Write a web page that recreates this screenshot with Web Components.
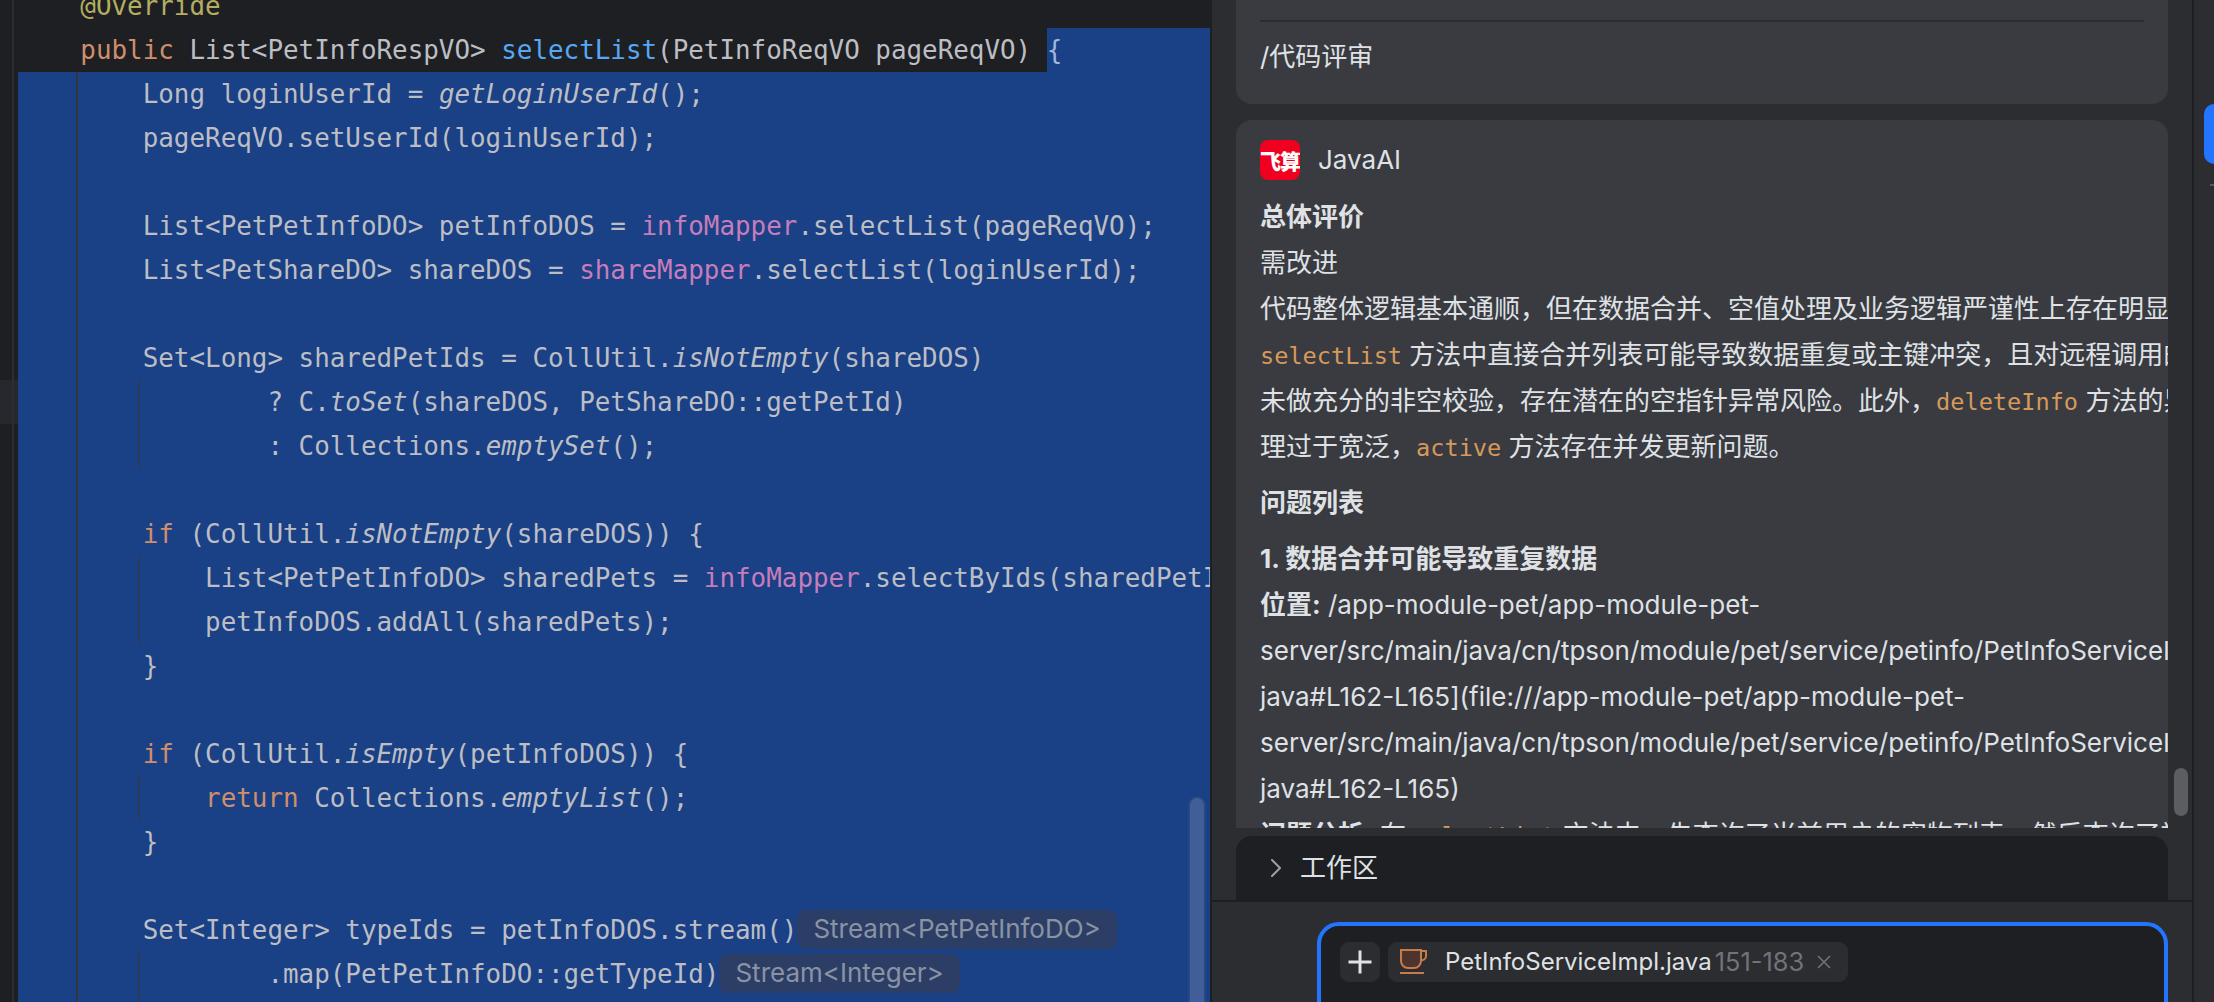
<!DOCTYPE html>
<html lang="zh">
<head>
<meta charset="utf-8">
<title>PetInfoServiceImpl</title>
<style>
html,body{margin:0;padding:0;height:100%;background:#1e1f22;overflow:hidden}
</style>
</head>
<body>
<app-shell>
  <code-editor>
    <code-line><code-tok k="ann">    @Override</code-tok></code-line>
    <code-line partial><code-tok k="kw">    public</code-tok> List&lt;PetInfoRespVO&gt; <code-tok k="fn">selectList</code-tok>(PetInfoReqVO pageReqVO) <code-tok k="br">{</code-tok></code-line>
    <code-line sel>        Long loginUserId = <code-tok k="it">getLoginUserId</code-tok>();</code-line>
    <code-line sel>        pageReqVO.setUserId(loginUserId);</code-line>
    <code-line sel></code-line>
    <code-line sel>        List&lt;PetPetInfoDO&gt; petInfoDOS = <code-tok k="fd">infoMapper</code-tok>.selectList(pageReqVO);</code-line>
    <code-line sel>        List&lt;PetShareDO&gt; shareDOS = <code-tok k="fd">shareMapper</code-tok>.selectList(loginUserId);</code-line>
    <code-line sel></code-line>
    <code-line sel>        Set&lt;Long&gt; sharedPetIds = CollUtil.<code-tok k="it">isNotEmpty</code-tok>(shareDOS)</code-line>
    <code-line sel g2>                ? C.<code-tok k="it">toSet</code-tok>(shareDOS, PetShareDO::getPetId)</code-line>
    <code-line sel g2>                : Collections.<code-tok k="it">emptySet</code-tok>();</code-line>
    <code-line sel></code-line>
    <code-line sel><code-tok k="kw">        if</code-tok> (CollUtil.<code-tok k="it">isNotEmpty</code-tok>(shareDOS)) {</code-line>
    <code-line sel g2>            List&lt;PetPetInfoDO&gt; sharedPets = <code-tok k="fd">infoMapper</code-tok>.selectByIds(sharedPetIds);</code-line>
    <code-line sel g2>            petInfoDOS.addAll(sharedPets);</code-line>
    <code-line sel>        }</code-line>
    <code-line sel></code-line>
    <code-line sel><code-tok k="kw">        if</code-tok> (CollUtil.<code-tok k="it">isEmpty</code-tok>(petInfoDOS)) {</code-line>
    <code-line sel g2><code-tok k="kw">            return</code-tok> Collections.<code-tok k="it">emptyList</code-tok>();</code-line>
    <code-line sel>        }</code-line>
    <code-line sel></code-line>
    <code-line sel>        Set&lt;Integer&gt; typeIds = petInfoDOS.stream()<inlay-hint>Stream&lt;PetPetInfoDO&gt;</inlay-hint></code-line>
    <code-line sel g2>                .map(PetPetInfoDO::getTypeId)<inlay-hint>Stream&lt;Integer&gt;</inlay-hint></code-line>
    <code-line sel g2></code-line>
  </code-editor>
  <chat-panel>
    <chat-card slot="list" first>
      <card-rule></card-rule>
      <md-line>/代码评审</md-line>
    </chat-card>
    <chat-card slot="list">
      <agent-head>JavaAI</agent-head>
      <md-line strong>总体评价</md-line>
      <md-line>需改进</md-line>
      <md-line>代码整体逻辑基本通顺&#xFF0C;但在数据合并、空值处理及业务逻辑严谨性上存在明显问题</md-line>
      <md-line><inline-code>selectList</inline-code> 方法中直接合并列表可能导致数据重复或主键冲突&#xFF0C;且对远程调用的</md-line>
      <md-line>未做充分的非空校验&#xFF0C;存在潜在的空指针异常风险。此外&#xFF0C;<inline-code>deleteInfo</inline-code> 方法的异常处</md-line>
      <md-line>理过于宽泛&#xFF0C;<inline-code>active</inline-code> 方法存在并发更新问题。</md-line>
      <md-line heading>问题列表</md-line>
      <md-line heading>1. 数据合并可能导致重复数据</md-line>
      <md-line><b>位置:</b> /app-module-pet/app-module-pet-</md-line>
      <md-line>server/src/main/java/cn/tpson/module/pet/service/petinfo/PetInfoServiceImpl.</md-line>
      <md-line>java#L162-L165](file:///app-module-pet/app-module-pet-</md-line>
      <md-line>server/src/main/java/cn/tpson/module/pet/service/petinfo/PetInfoServiceImpl.</md-line>
      <md-line>java#L162-L165)</md-line>
      <md-line><b>问题分析:</b> 在 <inline-code>selectList</inline-code> 方法中&#xFF0C;先查询了当前用户的宠物列表&#xFF0C;然后查询了被</md-line>
    </chat-card>
    <workspace-bar slot="work">工作区</workspace-bar>
    <input-box slot="input">
      <add-button></add-button>
      <file-chip lines="151-183">PetInfoServiceImpl.java</file-chip>
    </input-box>
  </chat-panel>
  <side-rail></side-rail>
</app-shell>

<script>
function def(name, css, html, init){
  customElements.define(name, class extends HTMLElement{
    constructor(){
      super();
      const r=this.attachShadow({mode:'open'});
      r.innerHTML='<style>'+css+'</style>'+html;
    }
    connectedCallback(){ if(init) init(this); }
  });
}
const UI='Inter,"Noto Sans CJK SC",sans-serif';
const MONO='"DejaVu Sans Mono","Noto Sans CJK SC",monospace';

def('app-shell',
 `:host{display:flex;width:2214px;height:1002px;overflow:hidden;background:#2b2d30;font-family:${UI}}`,
 `<slot></slot>`);

def('code-editor',
 `:host{display:flex;flex:0 0 1210px;width:1210px;height:1002px;overflow:hidden;position:relative;background:#1e1f22;color:#bcbec4}
  .gutter{flex:0 0 18px;height:100%;
    background:
      linear-gradient(#2b2d30,#2b2d30) 12px 0/2px 100% no-repeat,
      linear-gradient(#26282e,#26282e) 0 380px/100% 44px no-repeat,
      #1e1f22}
  .code{flex:1;min-width:0;margin-top:-16px;overflow:hidden}
  .bar{position:absolute;left:1190px;top:798px;width:14px;height:240px;box-sizing:content-box;
    background:#415e9a;border-radius:7px;box-shadow:0 0 0 1.5px #2b4a80}`,
 `<div class="gutter"></div><div class="code"><slot></slot></div><div class="bar"></div>`);

def('code-line',
 `:host{display:block;height:44px;line-height:44px;white-space:pre;overflow:hidden;
    font:400 25.9px/44px ${MONO};color:#bcbec4;--guide:linear-gradient(#33373d,#33373d) 58px 0/2px 100% no-repeat}
  :host([sel]){background:var(--guide),#1a4086}
  :host([sel][g2]){background:linear-gradient(#2a3b5c,#2a3b5c) 120px 0/2px 100% no-repeat,var(--guide),#1a4086}
  :host([partial]){background:linear-gradient(#1a4086,#1a4086) 1029px 0/100% 100% no-repeat}`,
 `<slot></slot>`);

def('code-tok',
 `:host{display:inline}
  :host([k=kw]){color:#cf8e6d}
  :host([k=fn]){color:#56a8f5}
  :host([k=ann]){color:#b3ae60}
  :host([k=fd]){color:#c77dbb}
  :host([k=it]){font-style:italic}
  :host([k=br]){color:#9fb9dc}`,
 `<slot></slot>`);

def('inlay-hint',
 `:host{display:inline-block;height:39px;vertical-align:top;margin-top:2px;padding:0 16px;
    box-sizing:border-box;background:#2c3e66;border-radius:9px;color:#8a93a3;font:400 26px/38px ${UI}}`,
 `<slot></slot>`);

def('chat-panel',
 `:host{display:flex;flex-direction:column;flex:1;min-width:0;height:1002px;border-left:2px solid #1e1f22;background:#2b2d30;position:relative;box-sizing:border-box}
  .list{flex:0 0 828px;height:828px;overflow:hidden;padding:0 24px;display:flex;flex-direction:column;gap:16px;box-sizing:border-box;position:relative}
  .bar{position:absolute;right:4px;top:768px;width:14px;height:48px;border-radius:7px;background:#5c5d60}
  .work{margin:8px 24px 0;height:64px;flex:0 0 64px}
  .bottom{flex:1;min-height:0;border-top:2px solid #1e1f22;padding:20px 24px 0 105px;overflow:hidden}`,
 `<div class="list"><slot name="list"></slot><div class="bar"></div></div>
  <div class="work"><slot name="work"></slot></div>
  <div class="bottom"><slot name="input"></slot></div>`);

def('chat-card',
 `:host{display:block;flex:0 0 auto;background:#393b40;border-radius:16px;padding:20px 24px 24px;color:#dfe1e5;overflow:hidden;font:400 26px/46px ${UI}}
  :host([first]){border-radius:0 0 16px 16px}`,
 `<slot></slot>`);

def('card-rule',
 `:host{display:block;height:2px;background:#2b2d30;margin-bottom:12px}`,``);

def('agent-head',
 `:host{display:flex;align-items:center;gap:18px;height:40px;margin-bottom:14px;line-height:40px;white-space:nowrap}
  .logo{width:40px;height:40px;border-radius:8px;background:#f0001e;color:#fff;overflow:hidden;display:flex;align-items:center;justify-content:center;
    font:900 21px/40px "Noto Sans CJK SC",sans-serif;white-space:nowrap;letter-spacing:-1px}`,
 `<span class="logo">飞算</span><slot></slot>`);

def('md-line',
 `:host{display:block;height:46px;line-height:46px;white-space:nowrap}
  :host([strong]){font-weight:700}
  :host([heading]){font-weight:700;margin-top:10px}`,
 `<slot></slot>`);

def('inline-code',
 `:host{display:inline;font:400 23.6px ${MONO};color:#d6995c}`,
 `<slot></slot>`);

def('workspace-bar',
 `:host{display:flex;align-items:center;height:64px;background:#1e1f22;border-radius:16px 16px 0 0;color:#dfe1e5;font:400 26px/1 ${UI};padding-left:35px;gap:19px;box-sizing:border-box}
  svg{flex:none;display:block}`,
 `<svg width="10" height="18" viewBox="0 0 10 18" fill="none"><path d="M1 1l8 8-8 8" stroke="#9da0a8" stroke-width="2" stroke-linecap="round" stroke-linejoin="round"/></svg><slot></slot>`);

def('input-box',
 `:host{display:flex;align-items:flex-start;gap:8px;height:160px;box-sizing:border-box;border:4px solid #2374ff;border-radius:22px;background:#1e1f22;padding:16px 18px 16px 19px}`,
 `<slot></slot>`);

def('add-button',
 `:host{display:flex;align-items:center;justify-content:center;width:40px;height:40px;background:#2b2d30;border-radius:9px;flex:none}`,
 `<svg width="24" height="24" viewBox="0 0 24 24" fill="none"><path d="M12 .5v23M.5 12h23" stroke="#dfe1e5" stroke-width="3"/></svg>`);

def('file-chip',
 `:host{display:flex;align-items:center;height:40px;width:460px;box-sizing:border-box;background:#2b2d30;border-radius:9px;padding-left:12px;color:#dfe1e5;font:400 24px/42px ${UI};white-space:nowrap;flex:none}
  svg{flex:none;display:block}
  .cup{margin-right:18px}
  .lines{color:#6f737a;margin-left:3px;font-size:25.4px}
  .x{margin-left:13px}`,
 `<svg class="cup" width="27" height="26" viewBox="0 0 27 26" fill="none">
    <path d="M1 1h20v11a7 7 0 0 1-7 7H8a7 7 0 0 1-7-7z" fill="#4e342e" stroke="#c97a4a" stroke-width="2"/>
    <path d="M21 2h5v5a4 4 0 0 1-5 4" stroke="#c97a4a" stroke-width="2"/>
    <path d="M0 24h24" stroke="#c97a4a" stroke-width="2"/>
  </svg><slot></slot><span class="lines"></span>
  <svg class="x" width="14" height="14" viewBox="0 0 14 14" fill="none"><path d="M1 1l12 12M13 1L1 13" stroke="#6f737a" stroke-width="1.6"/></svg>`,
 el=>{el.shadowRoot.querySelector('.lines').textContent=el.getAttribute('lines');});

def('side-rail',
 `:host{display:flex;flex-direction:column;align-items:flex-end;flex:0 0 22px;width:22px;height:1002px;box-sizing:border-box;border-left:2px solid #1e1f22;background:#2b2d30;padding-top:104px}
  .tab{width:10px;height:60px;background:#2374ff;border-radius:10px 0 0 10px}
  .dash{width:4px;height:2px;background:#55585d;margin-top:20px}`,
 `<div class="tab"></div><div class="dash"></div>`);
</script>
</body>
</html>
